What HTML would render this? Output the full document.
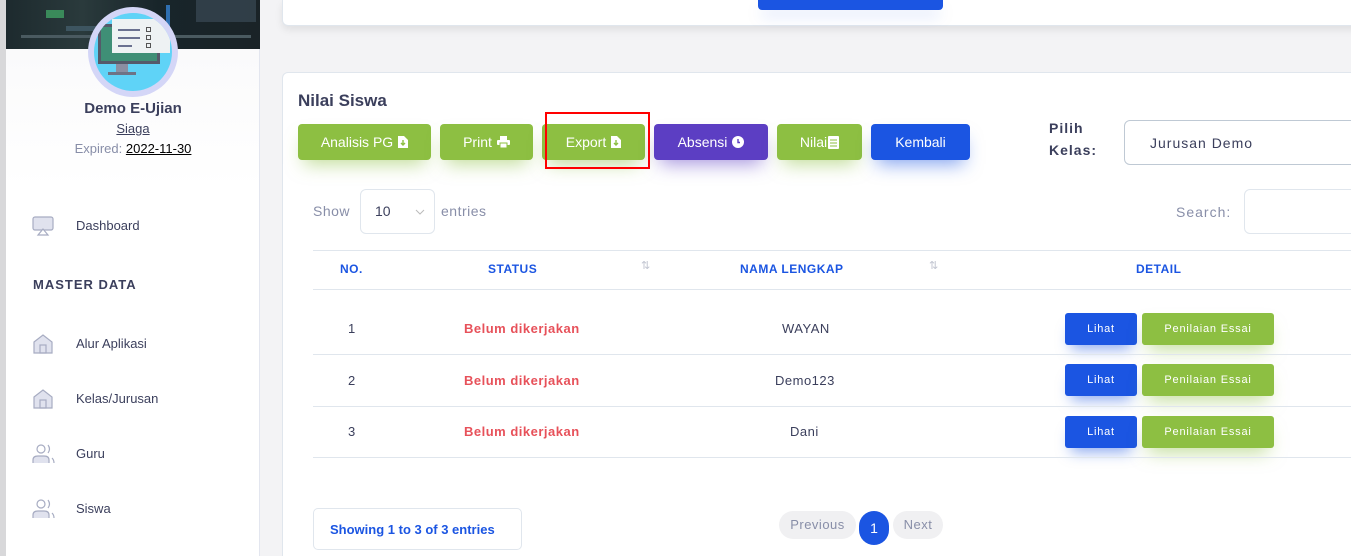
<!DOCTYPE html>
<html style="overflow:hidden;width:1351px;height:556px"><head><meta charset="utf-8">
<style>
*{box-sizing:border-box;margin:0;padding:0}
body{width:1351px;height:556px;overflow:hidden;background:#f3f3f5;font-family:"Liberation Sans",sans-serif;position:relative;color:#3b3f5c}
.abs{position:absolute}
.side{left:6px;top:0;width:254px;height:556px;background:#fff;border-right:1px solid #e3e6ef}
.hdr{left:6px;top:0;width:254px;height:49px;background:linear-gradient(90deg,#1d2a2e,#2a3a3c 30%,#18252a 60%,#1a2327);overflow:hidden}
.fade{left:6px;top:49px;width:253px;height:140px;background:linear-gradient(#fafafb,#fff)}
.btn{position:absolute;height:36px;border-radius:4px;color:#fff;font-size:14px;display:flex;align-items:center;justify-content:center;gap:5px}
.g{background:#8dbf42;box-shadow:0 10px 18px -6px rgba(141,191,66,.55)}
.p{background:#5c3ec3;box-shadow:0 10px 18px -6px rgba(92,62,195,.55)}
.b{background:#1b55e2;box-shadow:0 10px 18px -6px rgba(27,85,226,.55)}
.nav{position:absolute;left:76px;font-size:13px;color:#3b3f5c}
.ico{position:absolute;left:32px}
.th{position:absolute;top:262px;font-size:12px;font-weight:bold;color:#1b55e2;letter-spacing:.5px}
.row{position:absolute;left:313px;width:1038px;height:1px;background:#e0e6ed}
.td{position:absolute;font-size:13px;color:#3b3f5c;letter-spacing:.5px}
.st{position:absolute;left:464px;font-size:13px;font-weight:bold;color:#e7515a;letter-spacing:.5px}
.sb{position:absolute;height:32px;border-radius:3px;color:#fff;font-size:11px;letter-spacing:.8px;display:flex;align-items:center;justify-content:center}
</style></head><body>
<div class="abs" style="left:0;top:0;width:6px;height:556px;background:#d8d8da"></div>
<div class="abs side"></div>
<div class="abs fade"></div>
<div class="abs hdr">
 <div class="abs" style="left:40px;top:10px;width:18px;height:8px;background:#3a8a5a"></div>
 <div class="abs" style="left:60px;top:26px;width:60px;height:5px;background:#3d5560"></div>
 <div class="abs" style="left:160px;top:5px;width:4px;height:30px;background:#2f6fb0"></div>
 <div class="abs" style="left:190px;top:0;width:60px;height:22px;background:#3a4a55;opacity:.7"></div>
 <div class="abs" style="left:15px;top:35px;width:230px;height:3px;background:#4a5a60"></div>
</div>
<div class="abs" style="left:88px;top:7px;width:90px;height:90px;border-radius:50%;background:#d4d6f7"></div>
<div class="abs" style="left:94px;top:13px;width:78px;height:78px;border-radius:50%;background:#5fd3f7;overflow:hidden">
 <div class="abs" style="left:4px;top:11px;width:62px;height:40px;background:#3f8f76;border:3px solid #555a6a"></div>
 <div class="abs" style="left:22px;top:51px;width:12px;height:8px;background:#8b8fa2"></div>
 <div class="abs" style="left:14px;top:59px;width:28px;height:3px;background:#6e7386"></div>
 <div class="abs" style="left:18px;top:6px;width:58px;height:34px;background:#eef2f3"></div>
 <div class="abs" style="left:24px;top:16px;width:22px;height:2px;background:#6a7190"></div>
 <div class="abs" style="left:24px;top:24px;width:22px;height:2px;background:#6a7190"></div>
 <div class="abs" style="left:24px;top:32px;width:14px;height:2px;background:#6a7190"></div>
 <div class="abs" style="left:52px;top:14px;width:5px;height:5px;border:1px solid #555;"></div>
 <div class="abs" style="left:52px;top:22px;width:5px;height:5px;border:1px solid #555;"></div>
 <div class="abs" style="left:52px;top:30px;width:5px;height:5px;border:1px solid #555;"></div>
</div>
<div class="abs" style="left:6px;top:100px;width:254px;text-align:center;font-size:15px;font-weight:bold;color:#3b3f5c">Demo E-Ujian</div>
<div class="abs" style="left:6px;top:121px;width:254px;text-align:center;font-size:13px;color:#3b3f5c;text-decoration:underline">Siaga</div>
<div class="abs" style="left:6px;top:141px;width:254px;text-align:center;font-size:13px;color:#888ea8">Expired: <span style="color:#000;text-decoration:underline">2022-11-30</span></div>

<svg class="ico" style="top:214px" width="22" height="22" viewBox="0 0 22 22"><rect x="1" y="3" width="20" height="13" rx="2" fill="#e0e2ee" stroke="#a7acc2" stroke-width="1.2"/><path d="M11 15 L6 21 H16 Z" fill="#fff" stroke="#a7acc2" stroke-width="1.2"/></svg>
<div class="nav" style="top:218px">Dashboard</div>
<div class="abs" style="left:33px;top:277px;font-size:13px;font-weight:bold;letter-spacing:1px;color:#3b3f5c">MASTER DATA</div>
<svg class="ico" style="top:333px" width="22" height="22" viewBox="0 0 22 22"><path d="M2 9 L11 2 L20 9 V20 H2 Z" fill="#e0e2ee" stroke="#a7acc2" stroke-width="1.2"/><rect x="8" y="12" width="6" height="8" fill="none" stroke="#a7acc2" stroke-width="1.2"/></svg>
<div class="nav" style="top:336px">Alur Aplikasi</div>
<svg class="ico" style="top:388px" width="22" height="22" viewBox="0 0 22 22"><path d="M2 9 L11 2 L20 9 V20 H2 Z" fill="#e0e2ee" stroke="#a7acc2" stroke-width="1.2"/><rect x="8" y="12" width="6" height="8" fill="none" stroke="#a7acc2" stroke-width="1.2"/></svg>
<div class="nav" style="top:391px">Kelas/Jurusan</div>
<svg class="ico" style="top:443px" width="24" height="22" viewBox="0 0 24 22"><circle cx="9" cy="6" r="4" fill="none" stroke="#a7acc2" stroke-width="1.2"/><path d="M1 20 V17 Q1 13 6 13 H12 Q17 13 17 17 V20" fill="#e0e2ee" stroke="#a7acc2" stroke-width="1.2"/><path d="M16 2 Q19 6 16 10 M20 15 Q22 17 22 20" fill="none" stroke="#a7acc2" stroke-width="1.2"/></svg>
<div class="nav" style="top:446px">Guru</div>
<svg class="ico" style="top:498px" width="24" height="22" viewBox="0 0 24 22"><circle cx="9" cy="6" r="4" fill="none" stroke="#a7acc2" stroke-width="1.2"/><path d="M1 20 V17 Q1 13 6 13 H12 Q17 13 17 17 V20" fill="#e0e2ee" stroke="#a7acc2" stroke-width="1.2"/><path d="M16 2 Q19 6 16 10 M20 15 Q22 17 22 20" fill="none" stroke="#a7acc2" stroke-width="1.2"/></svg>
<div class="nav" style="top:501px">Siswa</div>

<div class="abs" style="left:282px;top:0;width:1080px;height:26px;background:#fff;border-bottom:1px solid #e0e6ed;border-left:1px solid #e0e6ed;border-radius:0 0 0 6px;box-shadow:0 4px 8px rgba(0,0,0,.08)"></div>
<div class="abs" style="left:758px;top:0;width:185px;height:10px;background:#1b55e2;border-radius:0 0 4px 4px;box-shadow:0 8px 14px -4px rgba(27,85,226,.5)"></div>

<div class="abs" style="left:282px;top:72px;width:1080px;height:484px;background:#fff;border:1px solid #e0e6ed;border-bottom:none;border-radius:6px 0 0 0"></div>
<div class="abs" style="left:298px;top:91px;font-size:17px;font-weight:bold;color:#3b3f5c">Nilai Siswa</div>
<div class="btn g" style="left:298px;top:124px;width:133px">Analisis PG <svg width="10" height="12" viewBox="0 0 10 12"><path d="M0 0H6L10 4V12H0Z" fill="#fff"/><path d="M5 4V9M3 7L5 9L7 7" stroke="#8dbf42" stroke-width="1.4" fill="none"/></svg></div>
<div class="btn g" style="left:440px;top:124px;width:93px">Print <svg width="13" height="12" viewBox="0 0 13 12"><rect x="3" y="0" width="7" height="4" fill="#fff"/><rect x="0" y="4" width="13" height="5" rx="1" fill="#fff"/><rect x="3" y="7" width="7" height="5" fill="#fff" stroke="#8dbf42" stroke-width="1"/></svg></div>
<div class="btn g" style="left:542px;top:124px;width:103px">Export <svg width="10" height="12" viewBox="0 0 10 12"><path d="M0 0H6L10 4V12H0Z" fill="#fff"/><path d="M5 4V9M3 7L5 9L7 7" stroke="#8dbf42" stroke-width="1.4" fill="none"/></svg></div>
<div class="abs" style="left:545px;top:112px;width:105px;height:57px;border:2px solid #f00"></div>
<div class="btn p" style="left:654px;top:124px;width:114px">Absensi <svg width="12" height="12" viewBox="0 0 12 12"><circle cx="6" cy="6" r="6" fill="#fff"/><path d="M6 3V6.5H8" stroke="#5c3ec3" stroke-width="1.4" fill="none"/></svg></div>
<div class="btn g" style="left:777px;top:124px;width:85px;gap:1px">Nilai<svg width="11" height="13" viewBox="0 0 11 13"><rect width="11" height="13" rx="1" fill="#fff"/><path d="M2 4H9M2 7H9M2 10H9" stroke="#8dbf42" stroke-width="1"/></svg></div>
<div class="btn b" style="left:871px;top:124px;width:99px">Kembali</div>

<div class="abs" style="left:1049px;top:117px;font-size:14px;font-weight:bold;color:#3b3f5c;line-height:22px;letter-spacing:1px">Pilih<br>Kelas:</div>
<div class="abs" style="left:1124px;top:120px;width:240px;height:45px;border:1px solid #bfc9d4;border-radius:6px;padding:14px 25px;font-size:14px;color:#3b3f5c;letter-spacing:1px">Jurusan Demo</div>

<div class="abs" style="left:313px;top:203px;font-size:14px;color:#888ea8;letter-spacing:.5px">Show</div>
<div class="abs" style="left:360px;top:189px;width:75px;height:45px;border:1px solid #e0e6ed;border-radius:6px;padding:13px 14px;font-size:14px;color:#3b3f5c">10<svg style="position:absolute;left:54px;top:19px" width="10" height="6" viewBox="0 0 10 6"><path d="M1 1L5 5L9 1" stroke="#bbb" fill="none"/></svg></div>
<div class="abs" style="left:441px;top:203px;font-size:14px;color:#888ea8;letter-spacing:.5px">entries</div>
<div class="abs" style="left:1176px;top:204px;font-size:14px;color:#888ea8;letter-spacing:1px">Search:</div>
<div class="abs" style="left:1244px;top:189px;width:120px;height:45px;border:1px solid #e0e6ed;border-radius:6px"></div>

<div class="row" style="top:250px"></div>
<div class="th" style="left:340px">NO.</div>
<div class="th" style="left:488px">STATUS</div>
<div class="abs" style="left:641px;top:259px;font-size:11px;color:#c0c4d0">⇅</div>
<div class="th" style="left:740px">NAMA LENGKAP</div>
<div class="abs" style="left:929px;top:259px;font-size:11px;color:#c0c4d0">⇅</div>
<div class="th" style="left:1136px">DETAIL</div>
<div class="row" style="top:289px"></div>

<div class="td" style="left:348px;top:321px">1</div>
<div class="st" style="top:321px">Belum dikerjakan</div>
<div class="td" style="left:782px;top:321px">WAYAN</div>
<div class="sb b" style="left:1065px;top:313px;width:72px;box-shadow:0 10px 14px -6px rgba(27,85,226,.5)">Lihat</div>
<div class="sb g" style="left:1142px;top:313px;width:132px">Penilaian Essai</div>
<div class="row" style="top:354px"></div>

<div class="td" style="left:348px;top:373px">2</div>
<div class="st" style="top:373px">Belum dikerjakan</div>
<div class="td" style="left:775px;top:373px">Demo123</div>
<div class="sb b" style="left:1065px;top:364px;width:72px;box-shadow:0 10px 14px -6px rgba(27,85,226,.5)">Lihat</div>
<div class="sb g" style="left:1142px;top:364px;width:132px">Penilaian Essai</div>
<div class="row" style="top:406px"></div>

<div class="td" style="left:348px;top:424px">3</div>
<div class="st" style="top:424px">Belum dikerjakan</div>
<div class="td" style="left:790px;top:424px">Dani</div>
<div class="sb b" style="left:1065px;top:416px;width:72px;box-shadow:0 10px 14px -6px rgba(27,85,226,.5)">Lihat</div>
<div class="sb g" style="left:1142px;top:416px;width:132px">Penilaian Essai</div>
<div class="row" style="top:457px"></div>

<div class="abs" style="left:313px;top:508px;width:209px;height:42px;border:1px solid #e0e6ed;border-radius:5px;padding:13px 16px;font-size:13px;font-weight:bold;color:#1b55e2">Showing 1 to 3 of 3 entries</div>
<div class="abs" style="left:779px;top:511px;width:77px;height:28px;border-radius:14px;background:#f0f0f2;font-size:13px;color:#888ea8;text-align:center;line-height:28px;letter-spacing:.5px">Previous</div>
<div class="abs" style="left:859px;top:511px;width:30px;height:34px;border-radius:15px;background:#1b55e2;color:#fff;font-size:14px;text-align:center;line-height:34px">1</div>
<div class="abs" style="left:893px;top:511px;width:50px;height:28px;border-radius:14px;background:#f0f0f2;font-size:13px;color:#888ea8;text-align:center;line-height:28px;letter-spacing:.5px">Next</div>
</body></html>
